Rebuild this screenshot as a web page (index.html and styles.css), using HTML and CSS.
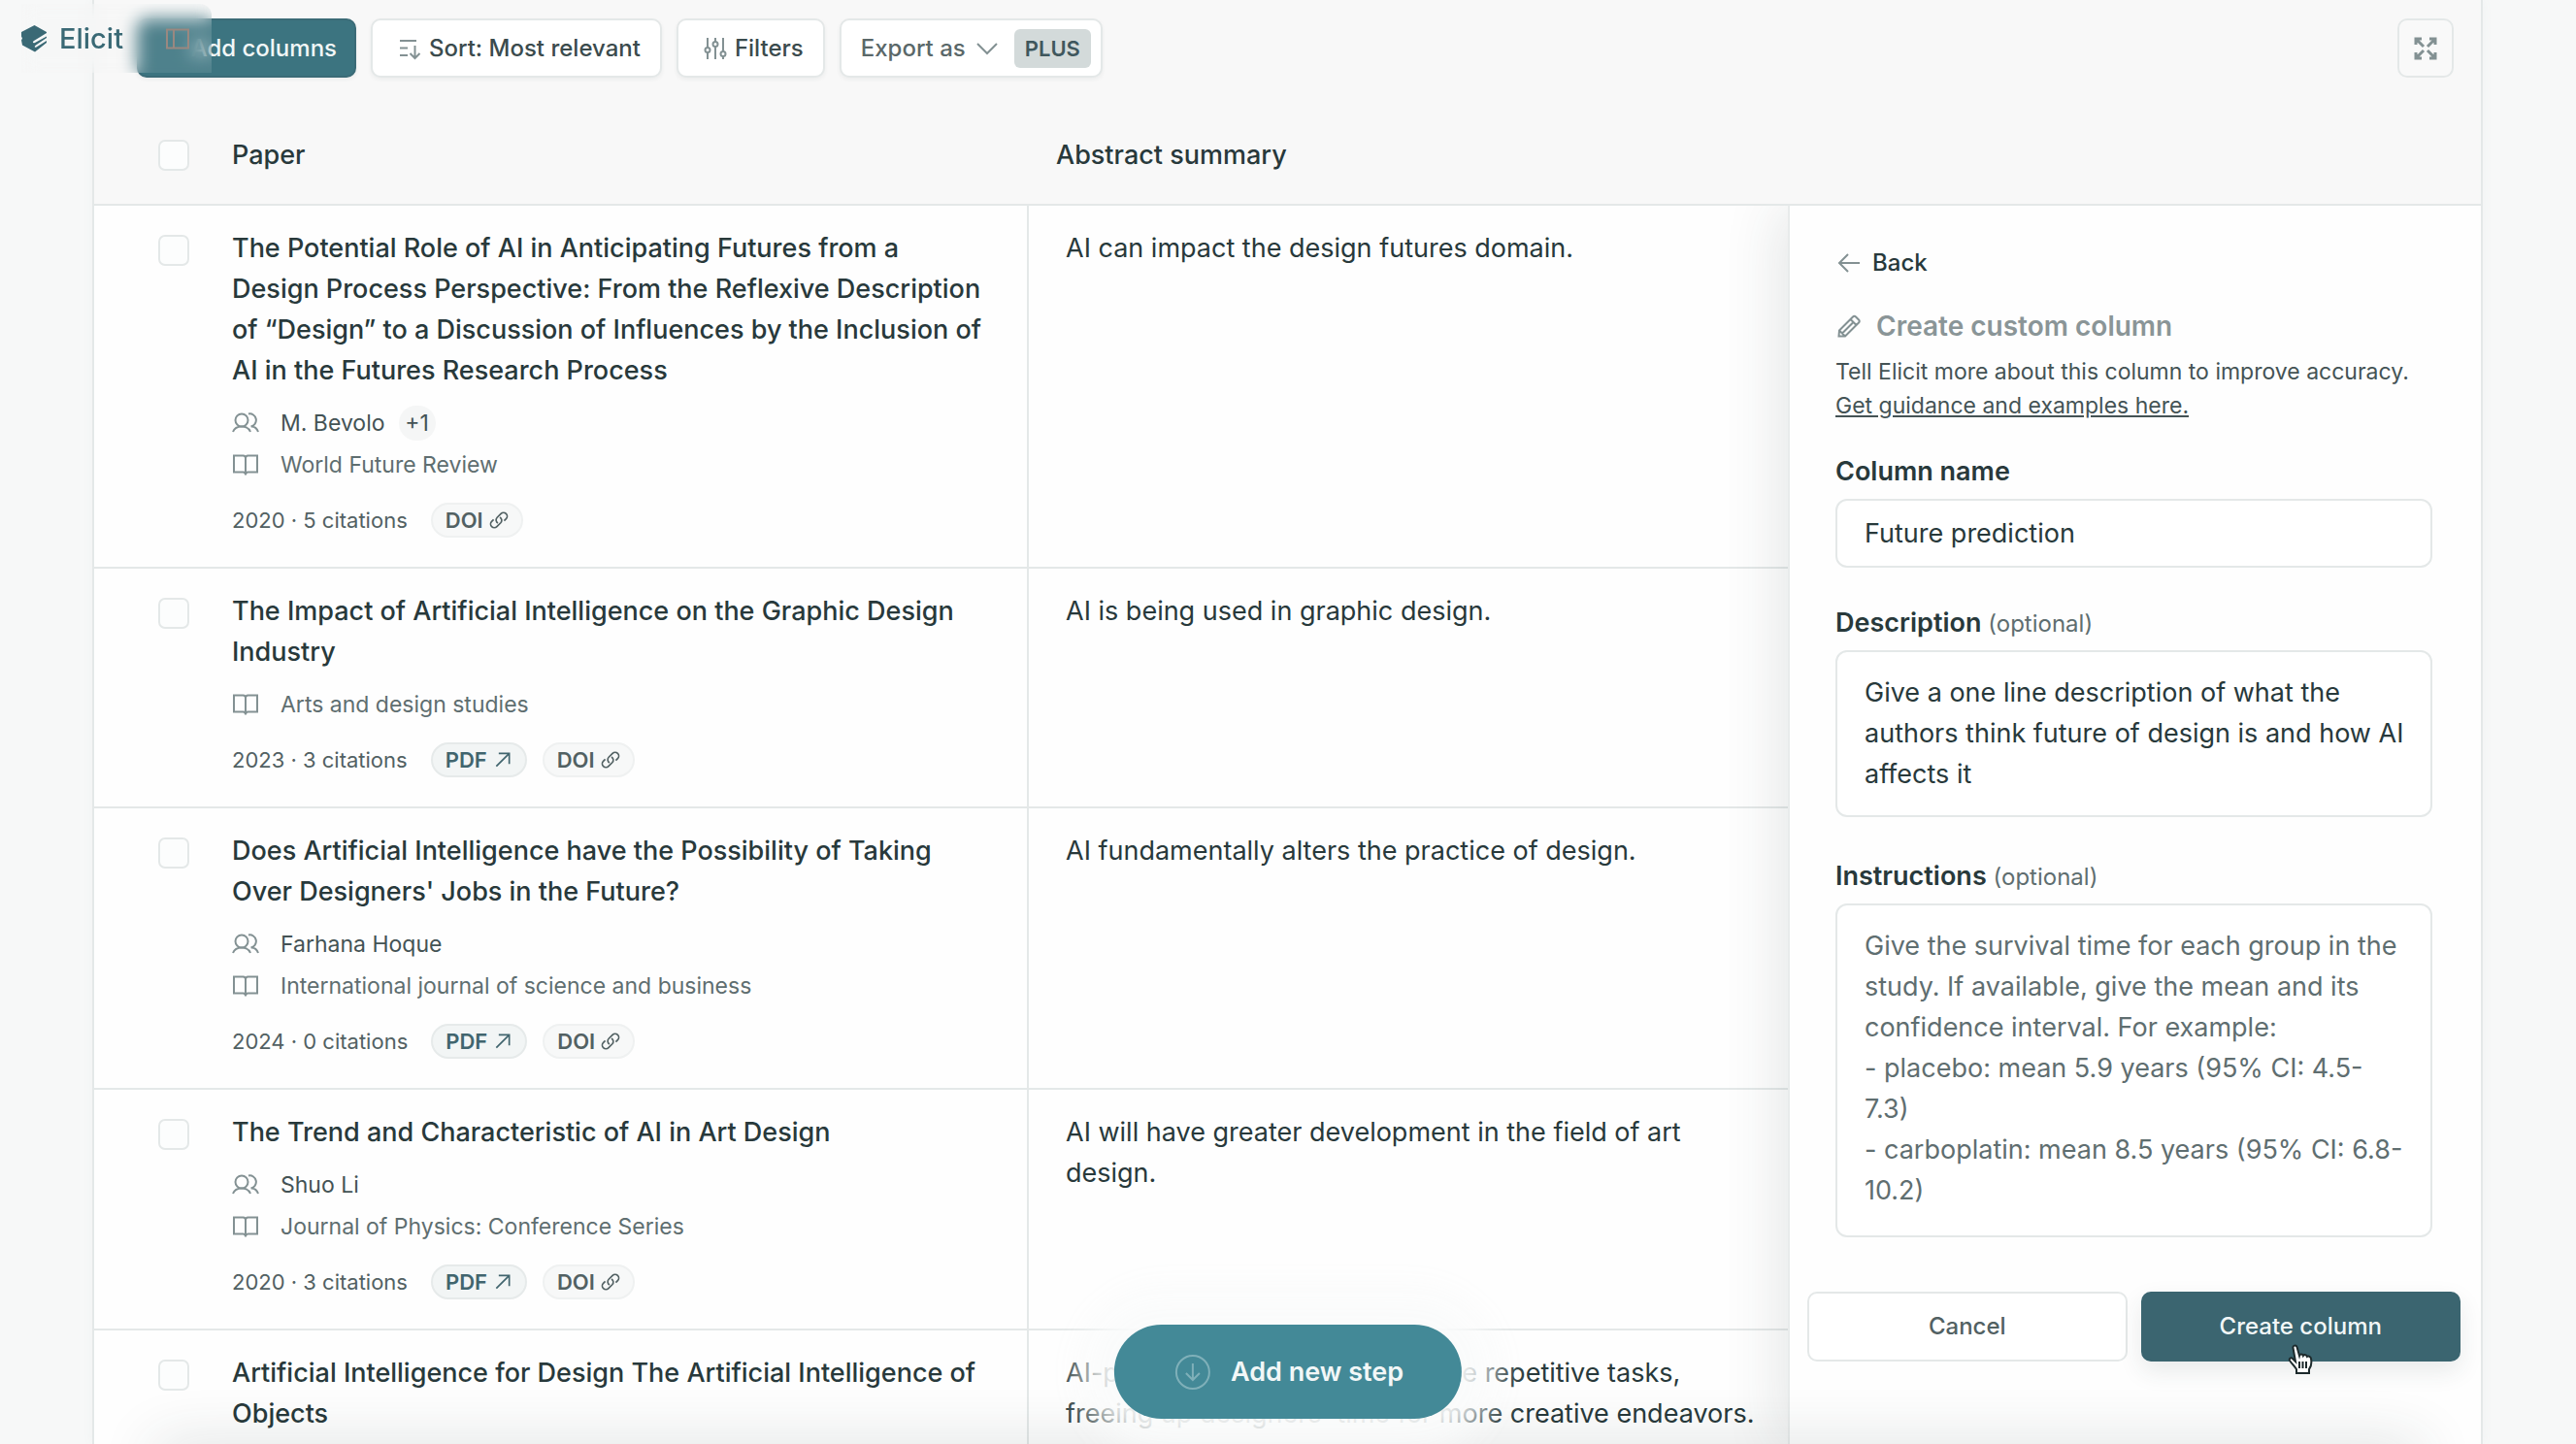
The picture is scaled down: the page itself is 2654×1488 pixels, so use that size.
FILE: index.html
```html
<!DOCTYPE html>
<html lang="en">
<head>
    <meta charset="utf-8">
    <title>Elicit</title>
    <link rel="stylesheet" href="styles.css">
</head>
<body>
    <!-- shared icons -->
    <svg class="sprite" aria-hidden="true">
        <symbol id="people" viewBox="0 0 28 24">
            <circle cx="10" cy="9" r="6.5"/>
            <path d="M1 21c1.500-4 5-5.500 9-5.500s7.500 1.500 9 5.500M17 2.500a6.500 6.500 0 0 1 2.500 13M20 15.500c3.500 0 5.800 2 7 5.500"/>
        </symbol>
        <symbol id="book" viewBox="0 0 28 24">
            <path d="M14 5c0-1.500-1-2.500-2.500-2.500H2v17h9.500c1.500 0 2.500 1 2.500 3M14 5c0-1.500 1-2.500 2.500-2.500H26v17h-9.500c-1.500 0-2.500 1-2.500 3M14 5v17.500"/>
        </symbol>
        <symbol id="link" viewBox="0 0 24 24">
            <path d="M13.200 8.300a4.500 4.500 0 0 1 1 7l-4.700 4.700a4.500 4.500 0 0 1-6.400-6.400L5.500 11.200M18.500 12.800l2.400-2.400a4.500 4.500 0 0 0-6.400-6.400L9.800 8.700a4.500 4.500 0 0 0 1 7"/>
        </symbol>
        <symbol id="arrow-out" viewBox="0 0 24 24">
            <path d="M4 20L20 4M7 4h13v13"/>
        </symbol>
    </svg>

    <div class="brand">
        <a href="#" class="brand-link">
            <svg class="logo" viewBox="0 0 27 28" aria-hidden="true">
                <path fill="currentColor" d="M13.500 0L26 7v1L13 16c-2 1.300-1 3 1 2l12-6.500v1.500l-11 7.500c-2 1.500-1.500 3 .5 2L26 16v2L14 27.500 1 20.500l-1-5 1-2-1-2V7z"/>
            </svg>
            <span>Elicit</span>
        </a>
        <button type="button" class="sidebar-toggle" aria-label="Toggle sidebar">
            <svg viewBox="0 0 26 22"><path d="M2 1.500h22v19H2zM9 1.500v19"/></svg>
        </button>
    </div>

    <main class="workspace">
        <div class="toolbar">
            <button type="button" class="btn btn-primary add-columns">Add columns</button>
            <button type="button" class="btn">
                <svg class="icon" viewBox="0 0 24 24"><path d="M2 4h17M2 11.500h8M2 19h8M17.500 9v13M12.500 17l5 5 5-5"/></svg>
                Sort: Most relevant
            </button>
            <button type="button" class="btn">
                <svg class="icon" viewBox="0 0 24 24"><path d="M4 1v10M4 16v7M12 1v4M12 10v13M20 1v14M20 20v3"/><circle cx="4" cy="13.500" r="2.500"/><circle cx="12" cy="7.500" r="2.500"/><circle cx="20" cy="17.500" r="2.500"/></svg>
                Filters
            </button>
            <button type="button" class="btn btn-export">
                Export as
                <svg class="icon" viewBox="0 0 24 24"><path d="M2 7l10 10L22 7"/></svg>
                <span class="plus">PLUS</span>
            </button>
            <button type="button" class="btn btn-expand" aria-label="Expand">
                <svg class="icon" viewBox="0 0 24 24"><path d="M10 10L2 2M2 8V2h6M14 10l8-8M16 2h6v6M10 14l-8 8M2 16v6h6M14 14l8 8M22 16v6h-6"/></svg>
            </button>
        </div>

        <div class="content">
            <table class="papers">
                <thead>
                    <tr>
                        <th class="check"><input type="checkbox" aria-label="Select all papers"></th>
                        <th class="paper">Paper</th>
                        <th class="abstract">Abstract summary</th>
                    </tr>
                </thead>
                <tbody>
                    <tr>
                        <td class="check"><input type="checkbox" aria-label="Select paper"></td>
                        <td class="paper">
                            <h3>The Potential Role of AI in Anticipating Futures from a Design Process Perspective: From the Reflexive Description of “Design” to a Discussion of Influences by the Inclusion of AI in the Futures Research Process</h3>
                            <p class="meta authors"><svg><use href="#people"/></svg>M. Bevolo <span class="more">+1</span></p>
                            <p class="meta"><svg><use href="#book"/></svg>World Future Review</p>
                            <p class="cites"><span>2020 · 5 citations</span><a href="#" class="pill">DOI<svg><use href="#link"/></svg></a></p>
                        </td>
                        <td class="abstract">AI can impact the design futures domain.</td>
                    </tr>
                    <tr>
                        <td class="check"><input type="checkbox" aria-label="Select paper"></td>
                        <td class="paper">
                            <h3>The Impact of Artificial Intelligence on the Graphic Design Industry</h3>
                            <p class="meta"><svg><use href="#book"/></svg>Arts and design studies</p>
                            <p class="cites"><span>2023 · 3 citations</span><a href="#" class="pill pdf">PDF<svg><use href="#arrow-out"/></svg></a><a href="#" class="pill">DOI<svg><use href="#link"/></svg></a></p>
                        </td>
                        <td class="abstract">AI is being used in graphic design.</td>
                    </tr>
                    <tr>
                        <td class="check"><input type="checkbox" aria-label="Select paper"></td>
                        <td class="paper">
                            <h3>Does Artificial Intelligence have the Possibility of Taking Over Designers' Jobs in the Future?</h3>
                            <p class="meta authors"><svg><use href="#people"/></svg>Farhana Hoque</p>
                            <p class="meta"><svg><use href="#book"/></svg>International journal of science and business</p>
                            <p class="cites"><span>2024 · 0 citations</span><a href="#" class="pill pdf">PDF<svg><use href="#arrow-out"/></svg></a><a href="#" class="pill">DOI<svg><use href="#link"/></svg></a></p>
                        </td>
                        <td class="abstract">AI fundamentally alters the practice of design.</td>
                    </tr>
                    <tr>
                        <td class="check"><input type="checkbox" aria-label="Select paper"></td>
                        <td class="paper">
                            <h3>The Trend and Characteristic of AI in Art Design</h3>
                            <p class="meta authors"><svg><use href="#people"/></svg>Shuo Li</p>
                            <p class="meta"><svg><use href="#book"/></svg>Journal of Physics: Conference Series</p>
                            <p class="cites"><span>2020 · 3 citations</span><a href="#" class="pill pdf">PDF<svg><use href="#arrow-out"/></svg></a><a href="#" class="pill">DOI<svg><use href="#link"/></svg></a></p>
                        </td>
                        <td class="abstract">AI will have greater development in the field of art design.</td>
                    </tr>
                    <tr>
                        <td class="check"><input type="checkbox" aria-label="Select paper"></td>
                        <td class="paper">
                            <h3>Artificial Intelligence for Design The Artificial Intelligence of Objects</h3>
                        </td>
                        <td class="abstract">AI-powered tools could automate repetitive tasks, freeing up designers' time for more creative endeavors.</td>
                    </tr>
                </tbody>
            </table>

            <form class="panel">
                <div class="fields">
                    <button type="button" class="back">
                        <svg class="icon" viewBox="0 0 24 24"><path d="M23 12H2M11 3l-9 9 9 9"/></svg>
                        Back
                    </button>
                    <h2>
                        <svg class="icon" viewBox="0 0 24 24"><path d="M2 16.500L16 2.500q1.500-1.500 3 0l3 3q1.500 1.500 0 3L8 22.500H1.500zM13.500 5l6 6M2 16.500l6 6M5 19.500L16.500 8"/></svg>
                        Create custom column
                    </h2>
                    <p class="intro">Tell Elicit more about this column to improve accuracy. <a href="#">Get guidance and examples here.</a></p>

                    <label for="column-name">Column name</label>
                    <input type="text" id="column-name" value="Future prediction">

                    <label for="description">Description <span>(optional)</span></label>
                    <textarea id="description" rows="3">Give a one line description of what the authors think future of design is and how AI affects it</textarea>

                    <label for="instructions">Instructions <span>(optional)</span></label>
                    <textarea id="instructions" rows="7" placeholder="Give the survival time for each group in the study. If available, give the mean and its confidence interval. For example:&#10;- placebo: mean 5.9 years (95% CI: 4.5-7.3)&#10;- carboplatin: mean 8.5 years (95% CI: 6.8-10.2)"></textarea>
                </div>
                <div class="actions">
                    <button type="button" class="action cancel">Cancel</button>
                    <button type="submit" class="action create">Create column
                        <svg class="pointer" viewBox="0 0 26 32" aria-hidden="true"><path d="M9 30v-4c-2-3-4.500-5.500-7-9-1-2 1.500-3.500 3-2l3 3L5.500 4C5 1.500 8.500.5 9.500 3l2.500 9c.5-2 3.500-2 4 0 1-1.500 3.500-1 4 1 1.500-1 3.500 0 4 2 .8 4.500.5 8-2 11v4z"/><path d="M12 18v7M15.500 18v7M19 18v7"/></svg>
                    </button>
                </div>
            </form>
        </div>
    </main>

    <button type="button" class="add-step">
        <svg viewBox="0 0 38 38"><circle cx="19" cy="19" r="17"/><path d="M19 10v17M12 20l7 7 7-7"/></svg>
        Add new step
    </button>
    <div class="bottom-fade"></div>
</body>
</html>
```

FILE: styles.css
```css
* {
    box-sizing: border-box;
}

body {
    margin: 0;
    height: 100vh;
    overflow: hidden;
    padding: 0 96px 0 95px;
    font-family: Inter, "Liberation Sans", sans-serif;
    font-size: 27px;
    line-height: 42px;
    color: #28393b;
    background-color: #f7f8f8;
}

button, input, textarea {
    font: inherit;
    color: inherit;
}

button {
    cursor: pointer;
}

svg {
    fill: none;
    stroke: currentColor;
    stroke-width: 2;
    flex: none;
}

.sprite {
    position: absolute;
    width: 0;
    height: 0;
}

.icon {
    width: 24px;
    height: 24px;
    color: #839193;
}

/* Logo, floats over the page */
.brand {
    position: absolute;
    z-index: 3;
    top: 4px;
    left: 22px;
    width: 196px;
    height: 71px;
    padding-right: 22px;
    display: flex;
    align-items: center;
    justify-content: space-between;
    border-radius: 0 12px 0 0;
    background-color: rgba(245, 248, 248, 0.1);
    backdrop-filter: blur(9px);
}

.brand-link {
    display: flex;
    align-items: center;
    gap: 12px;
    color: #3a6975;
    font-size: 29px;
    font-weight: 500;
    text-decoration: none;
}

.logo {
    width: 27px;
    height: 28px;
    stroke: none;
}

.sidebar-toggle {
    display: flex;
    padding: 0;
    border: none;
    background: none;
    color: #9a8880;
}

.sidebar-toggle svg {
    width: 26px;
    height: 22px;
}

/* Main sheet */
.workspace {
    height: 100%;
    display: flex;
    flex-direction: column;
    border: solid #e4e8e8;
    border-width: 0 2px;
    background-color: #fefefe;
    box-shadow: 0 0 10px #eff2f2;
}

.toolbar {
    display: flex;
    gap: 15px;
    height: 110px;
    padding: 19px 28px 0 44px;
    background-color: #f8f8f8;
    flex: none;
}

.btn {
    display: flex;
    align-items: center;
    gap: 8px;
    height: 61px;
    padding: 0 20px 0 26px;
    border: 2px solid #e4e8e8;
    border-radius: 10px;
    background-color: #fff;
    box-shadow: 0 2px 4px rgba(40, 57, 59, 0.06);
    font-size: 24px;
    font-weight: 500;
    line-height: 36px;
    color: #3b4b4d;
    white-space: nowrap;
}

.btn-primary {
    width: 226px;
    padding: 0 18px;
    justify-content: flex-end;
    border-color: #3b6b77;
    background-color: #3c7480;
    color: #f2f7f7;
}

.btn-export {
    gap: 10px;
    padding: 0 10px 0 20px;
    color: #5a6869;
}

.plus {
    margin-left: 6px;
    padding: 2px 11px;
    border-radius: 6px;
    background-color: #d3dada;
    color: #3f575d;
    font-size: 22px;
    font-weight: 600;
}

.btn-expand {
    width: 58px;
    margin-left: auto;
    padding: 0;
    justify-content: center;
    background-color: #f9f9f9;
    box-shadow: none;
}

.btn-expand .icon {
    stroke-width: 3;
}

/* The panel shares the grid with the table and lies over its right side */
.content {
    flex: 1;
    min-height: 0;
    display: grid;
    grid-template-columns: 1fr 714px;
    grid-template-rows: 102px 1fr;
}

.papers {
    grid-area: 1 / 1 / 3 / 3;
    align-self: start;
    width: 100%;
    table-layout: fixed;
    border-collapse: separate;
    border-spacing: 0;
}

.papers th {
    height: 102px;
    padding: 0;
    border-bottom: 2px solid #e4e8e8;
    background-color: #f8f8f8;
    text-align: left;
    font-weight: 500;
}

.papers td {
    padding: 23px 0 0;
    border-bottom: 2px solid #e4e8e8;
    vertical-align: top;
}

.papers .check {
    width: 142px;
    padding-left: 66px;
}

.papers .paper {
    width: 819px;
    padding-right: 38px;
}

.papers td.paper {
    padding-bottom: 30px;
}

.papers .abstract {
    padding-left: 30px;
    padding-right: 746px;
}

.papers td.abstract {
    padding-left: 38px;
    border-left: 2px solid #e4e8e8;
}

input[type="checkbox"] {
    appearance: none;
    display: block;
    width: 32px;
    height: 32px;
    margin: 0;
    border: 2px solid #e4e8e8;
    border-radius: 7px;
    background-color: #fcfdfd;
}

td input[type="checkbox"] {
    margin-top: 7px;
}

.papers h3 {
    margin: 0 0 11px;
    font-size: 27px;
    font-weight: 500;
}

.meta {
    display: flex;
    align-items: center;
    margin: 0;
    height: 43px;
    font-size: 23px;
    color: #5f6e70;
}

.meta svg {
    width: 28px;
    height: 24px;
    margin-right: 22px;
    color: #839193;
}

.authors {
    color: #445355;
}

.more {
    margin-left: 14px;
    min-width: 38px;
    border-radius: 18px;
    background-color: #f5f6f6;
    line-height: 36px;
    text-align: center;
}

.cites {
    display: flex;
    align-items: center;
    gap: 16px;
    margin: 18px 0 0;
    font-size: 22px;
    line-height: 36px;
    color: #526163;
}

.cites span {
    margin-right: 8px;
}

.pill {
    display: flex;
    align-items: center;
    gap: 6px;
    height: 36px;
    padding: 0 13px;
    border: 2px solid #eff1f1;
    border-radius: 18px;
    background-color: #f7f8f8;
    color: #526163;
    font-weight: 600;
    text-decoration: none;
}

.pill svg {
    width: 20px;
    height: 20px;
}

.pdf {
    border-color: #e6eaea;
    background-color: #f2f5f5;
    color: #41656e;
}

/* Custom column panel */
.panel {
    grid-area: 2 / 2;
    padding-top: 35px;
    border-left: 2px solid #e8ebeb;
    background-color: #fefefe;
    box-shadow: -8px 0 56px rgba(40, 57, 59, 0.12);
    clip-path: inset(0 0 0 -90px);
}

.fields {
    padding: 0 50px 0 47px;
}

.back {
    display: flex;
    align-items: center;
    gap: 12px;
    padding: 0 0 0 2px;
    border: none;
    background: none;
    font-size: 24px;
    font-weight: 500;
    line-height: 48px;
}

.panel h2 {
    display: flex;
    align-items: center;
    gap: 16px;
    margin: 20px 0 9px;
    padding-left: 2px;
    font-size: 28px;
    font-weight: 600;
    color: #8a9597;
}

.intro {
    margin: 0 0 29px;
    font-size: 23px;
    line-height: 35px;
    color: #445355;
}

.intro a {
    color: inherit;
}

.panel label {
    display: block;
    margin-bottom: 7px;
    font-weight: 600;
}

.panel label span {
    font-size: 24px;
    font-weight: 400;
    line-height: 24px;
    color: #5f6e70;
}

.panel input, .panel textarea {
    display: block;
    width: 100%;
    margin: 0 0 36px;
    padding: 13px 28px 12px;
    border: 2px solid #e4e8e8;
    border-radius: 12px;
    background-color: #fff;
    outline: none;
}

.panel textarea {
    padding: 21px 28px;
    margin-bottom: 40px;
    resize: none;
    overflow: hidden;
}

.panel #description {
    padding-right: 20px;
}

.panel #instructions {
    min-height: 344px;
}

.panel textarea::placeholder {
    color: #5f6e70;
    opacity: 1;
}

.actions {
    display: flex;
    gap: 14px;
    padding: 16px 21px 0 18px;
}

.action {
    position: relative;
    flex: 1;
    height: 72px;
    border: 2px solid #e4e8e8;
    border-radius: 10px;
    background-color: #fff;
    font-size: 24px;
    font-weight: 500;
    color: #526163;
}

.create {
    border-color: #3b6570;
    background-color: #3b6570;
    box-shadow: 0 10px 24px rgba(40, 57, 59, 0.1);
    color: #f2f7f7;
}

.pointer {
    position: absolute;
    top: 52px;
    left: 149px;
    width: 26px;
    height: 32px;
    fill: #fff;
    stroke: #1d2a2c;
}

/* Floating button, hides the rows behind it with a soft glow */
.add-step {
    position: absolute;
    z-index: 2;
    bottom: 26px;
    left: 50%;
    transform: translateX(-50%);
    display: flex;
    align-items: center;
    gap: 20px;
    height: 97px;
    padding: 0 60px 0 62px;
    border: none;
    border-radius: 49px;
    background-color: #438997;
    box-shadow: 0 0 36px 34px rgba(250, 251, 251, 0.95);
    font-weight: 600;
    color: #f2f7f7;
    white-space: nowrap;
}

.add-step svg {
    width: 38px;
    height: 38px;
    color: #7fb0b9;
}

.bottom-fade {
    position: absolute;
    z-index: 1;
    left: 160px;
    right: 160px;
    bottom: -40px;
    height: 40px;
    box-shadow: 0 0 60px rgba(40, 57, 59, 0.16);
}
```
